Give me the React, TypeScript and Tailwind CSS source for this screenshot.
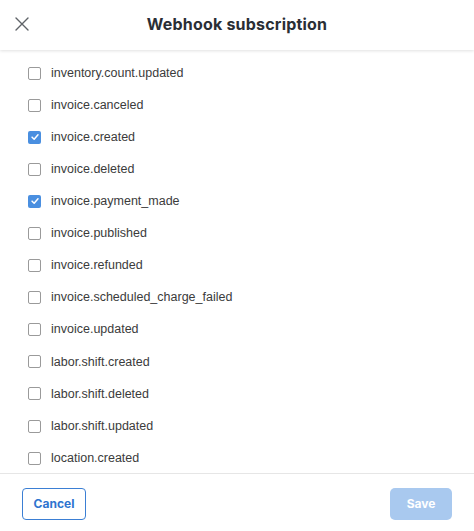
import { useState } from 'react';

const events = [
  'inventory.count.updated',
  'invoice.canceled',
  'invoice.created',
  'invoice.deleted',
  'invoice.payment_made',
  'invoice.published',
  'invoice.refunded',
  'invoice.scheduled_charge_failed',
  'invoice.updated',
  'labor.shift.created',
  'labor.shift.deleted',
  'labor.shift.updated',
  'location.created',
];

function Checkbox({ checked }: { checked: boolean }) {
  if (checked) {
    return (
      <span className="flex h-[13px] w-[13px] items-center justify-center rounded-[2px] bg-[#4a8fe0]">
        <svg viewBox="0 0 12 12" className="h-[10px] w-[10px]" fill="none">
          <path d="M2.5 6.2 L5 8.6 L9.6 3.4" stroke="white" strokeWidth="1.8" strokeLinecap="round" strokeLinejoin="round" />
        </svg>
      </span>
    );
  }
  return <span className="h-[13px] w-[13px] rounded-[2px] border border-[#9a9a9a] bg-white" />;
}

export default function App() {
  const [selected, setSelected] = useState<string[]>(['invoice.created', 'invoice.payment_made']);

  const toggle = (name: string) =>
    setSelected((s) => (s.includes(name) ? s.filter((x) => x !== name) : [...s, name]));

  return (
    <div className="flex h-[531px] w-[474px] flex-col bg-white font-['Inter',sans-serif]">
      {/* Header */}
      <div className="relative z-10 flex h-[50px] shrink-0 items-center justify-center pb-[3px] shadow-[0_1px_3px_rgba(0,0,0,0.12)]">
        <button className="absolute left-[15px] top-[17px] text-[#5f6368]">
          <svg viewBox="0 0 14 14" className="h-[14px] w-[14px]" fill="none">
            <path d="M1 1 L13 13 M13 1 L1 13" stroke="currentColor" strokeWidth="1.4" strokeLinecap="round" />
          </svg>
        </button>
        <h1 className="text-[16px] font-bold tracking-[0.2px] text-[#2a2e35]">Webhook subscription</h1>
      </div>

      {/* List */}
      <div className="flex-1 overflow-hidden pt-[7px] font-['Liberation_Sans',sans-serif]">
        {events.map((name) => (
          <label
            key={name}
            className="flex h-[32.1px] cursor-pointer items-center gap-[10px] pl-[28px] text-[12.5px] text-[#3b3b3b]"
            onClick={() => toggle(name)}
          >
            <Checkbox checked={selected.includes(name)} />
            <span>{name}</span>
          </label>
        ))}
      </div>

      {/* Footer */}
      <div className="flex h-[58px] shrink-0 items-start justify-between border-t border-[#e6e6e6] px-[22px] pt-[14px]">
        <button className="h-[32px] w-[64px] rounded-[4px] border border-[#3b7fd4] text-[12px] font-bold text-[#2f74cf]">
          Cancel
        </button>
        <button className="h-[32px] w-[62px] rounded-[5px] bg-[#a9c9ef] text-[12px] font-bold text-white">
          Save
        </button>
      </div>
    </div>
  );
}
